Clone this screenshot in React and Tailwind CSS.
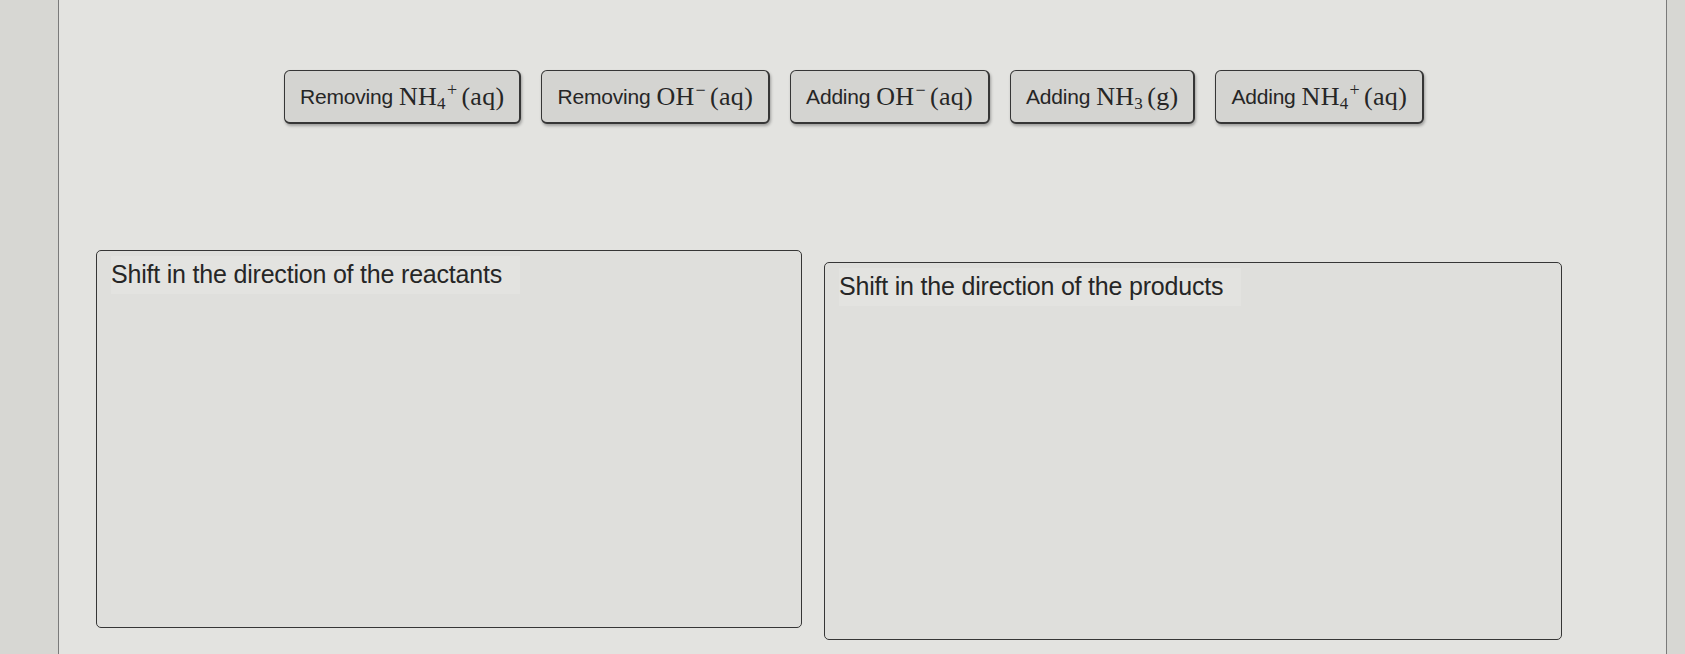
const sans = "font-['Liberation_Sans',Arial,sans-serif]";
const serif = "font-['Liberation_Serif','Times_New_Roman',serif]";

// chemical species written like a typeset formula
const Chem = ({ base, sub, sup, phase }) => (
    <span className={`${serif} text-[26px] leading-none tracking-[0.3px]`}>
        {base}
        {sub && <sub className="text-[17px]">{sub}</sub>}
        {sup && <sup className="text-[18px] ml-[1px]">{sup}</sup>}
        <span className="ml-[4px]">({phase})</span>
    </span>
);

const choices = [
    { verb: "Removing", base: "NH", sub: "4", sup: "+", phase: "aq" },
    { verb: "Removing", base: "OH", sup: "\u2212", phase: "aq" },
    { verb: "Adding", base: "OH", sup: "\u2212", phase: "aq" },
    { verb: "Adding", base: "NH", sub: "3", phase: "g" },
    { verb: "Adding", base: "NH", sub: "4", sup: "+", phase: "aq" },
];

const Chip = ({ item }) => (
    <div className="h-[54px] flex items-center gap-[6px] px-[15px] rounded-[6px] bg-[#d4d4d1] border border-[#363636] border-b-2 border-r-2 shadow-[1px_2px_3px_rgba(0,0,0,0.3)] text-[#262626]">
        <span className={`${sans} text-[21px] tracking-[-0.2px]`}>{item.verb}</span>
        <Chem base={item.base} sub={item.sub} sup={item.sup} phase={item.phase} />
    </div>
);

const DropBox = ({ title, className }) => (
    <div className={`h-[378px] rounded-[5px] border-[1.5px] border-[#363636] bg-[#dfdfdc] ${className}`}>
        <div className="px-[14px] pt-[5px]">
            <span className={`${sans} inline-block pr-[18px] text-[25px] tracking-[-0.2px] text-[#262626] bg-[#e3e3e0]`}>
                {title}
            </span>
        </div>
    </div>
);

export default function App() {
    return (
        <div className="w-full h-[654px] flex bg-[#d7d7d3] overflow-hidden">
            <div className="w-[58px] shrink-0" />
            <main className="flex-1 bg-[#e3e3e0] border-l border-r border-[#7a7a7a]">
                <div className="pt-[70px] pl-[225px] flex items-center gap-5">
                    {choices.map((item, i) => (
                        <Chip key={i} item={item} />
                    ))}
                </div>
                <div className="mt-[126px] pl-[37px] flex items-start gap-[22px]">
                    <DropBox title="Shift in the direction of the reactants" className="w-[706px]" />
                    <DropBox title="Shift in the direction of the products" className="w-[738px] mt-[12px]" />
                </div>
            </main>
            <div className="w-[18px] shrink-0" />
        </div>
    );
}
